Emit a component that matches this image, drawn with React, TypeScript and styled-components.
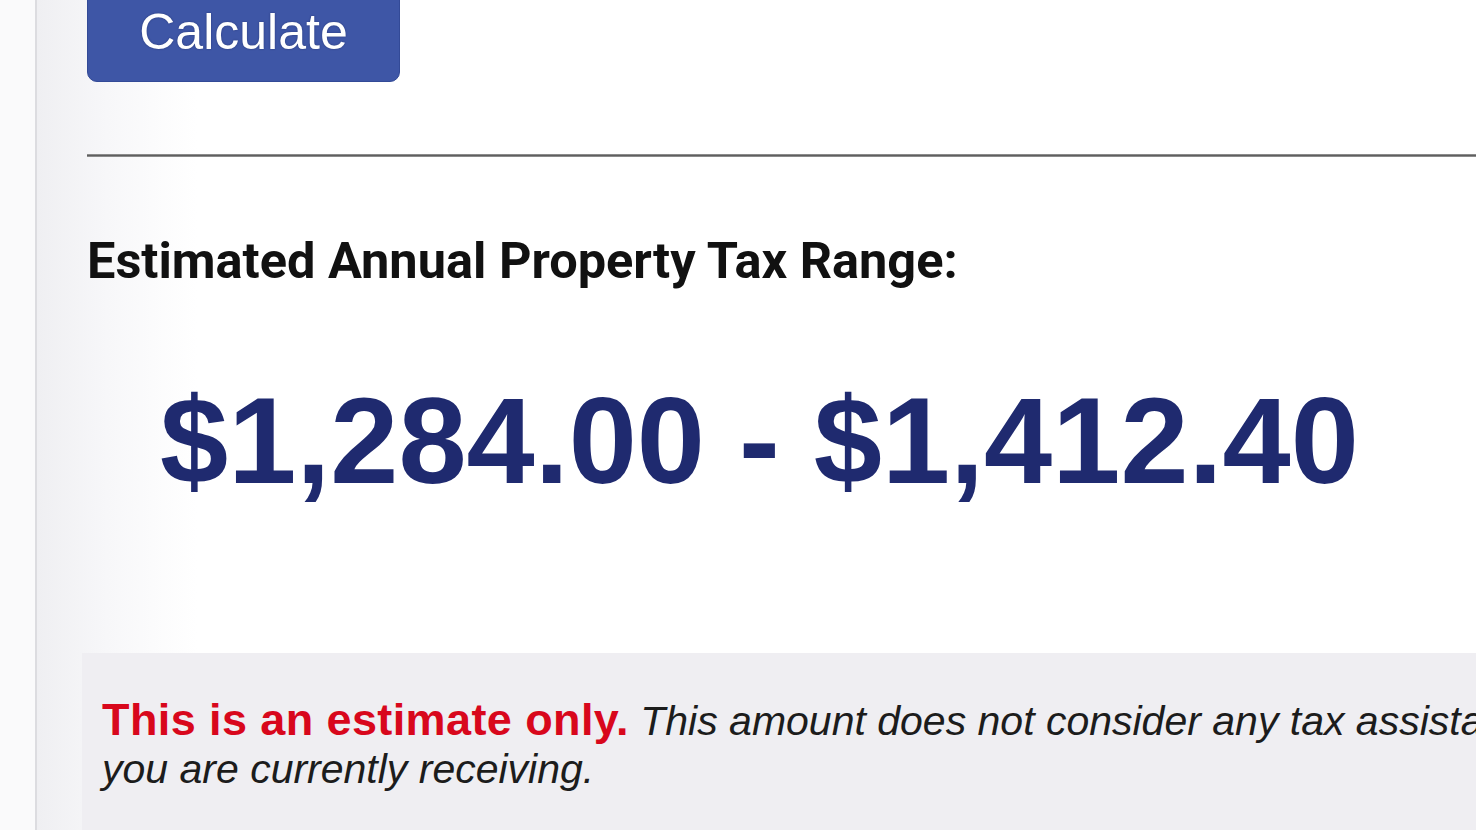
import React from "react";
import styled, { createGlobalStyle } from "styled-components";

const GlobalStyle = createGlobalStyle`
  html, body {
    margin: 0;
    padding: 0;
    height: 100%;
    overflow: hidden;
    background: #fafafb;
  }
  #root {
    height: 100%;
  }
`;

const Page = styled.div`
  display: flex;
  height: 100%;
  width: 100%;
  overflow: hidden;
`;

const Gutter = styled.div`
  flex: 0 0 35px;
  background: #fafafb;
  border-right: 2px solid #dcdce0;
`;

const Main = styled.main`
  flex: 1;
  min-width: 0;
  overflow: hidden;
  background: linear-gradient(to right, #efeff2 0, #f7f7f9 70px, #ffffff 160px);
  padding-left: 50px;
`;

const Form = styled.div`
  margin-top: -18px;
`;

const Button = styled.button`
  display: flex;
  align-items: center;
  justify-content: center;
  width: 313px;
  height: 100px;
  padding: 0;
  background: #3e56a6;
  border: 1px solid #334a97;
  border-radius: 10px;
  color: #ffffff;
  font-family: "Liberation Sans", Arial, sans-serif;
  font-size: 50px;
  text-shadow: 0 0 2px rgba(10, 20, 60, 0.45);
  cursor: pointer;
`;

const Rule = styled.hr`
  margin: 72px 0 0;
  height: 3px;
  border: 0;
  background: linear-gradient(#a9a9a9, #5f5f5f 40%, #5f5f5f 60%, #a9a9a9);
`;

const Heading = styled.h2`
  margin: 75px 0 0;
  font-family: Roboto, "Liberation Sans", sans-serif;
  font-weight: 700;
  font-size: 50.5px;
  line-height: 58px;
  color: #111111;
`;

const Amount = styled.div`
  margin: 90px 0 0;
  padding-left: 73px;
  font-family: "Liberation Sans", Arial, sans-serif;
  font-weight: 700;
  font-size: 122.5px;
  line-height: 122px;
  color: #1f2a6f;
  white-space: nowrap;
`;

const Notice = styled.div`
  margin: 151px 0 0 -5px;
  padding: 43px 0 60px 20px;
  background: #efeef2;
  font-family: "Liberation Sans", Arial, sans-serif;
  font-size: 41px;
  line-height: 48px;
  color: #1c1c1c;
  white-space: nowrap;
`;

const Warning = styled.strong`
  color: #d8071c;
  font-weight: 700;
  font-size: 45px;
  letter-spacing: 0.4px;
`;

const Detail = styled.em`
  font-style: italic;
`;

export default function App() {
  return (
    <>
      <GlobalStyle />
      <Page>
        <Gutter />
        <Main>
          <Form>
            <Button type="button">Calculate</Button>
          </Form>
          <Rule />
          <Heading>Estimated Annual Property Tax Range:</Heading>
          <Amount>$1,284.00 - $1,412.40</Amount>
          <Notice>
            <Warning>This is an estimate only.</Warning>{" "}
            <Detail>
              This amount does not consider any tax assistance
              <br />
              you are currently receiving.
            </Detail>
          </Notice>
        </Main>
      </Page>
    </>
  );
}
